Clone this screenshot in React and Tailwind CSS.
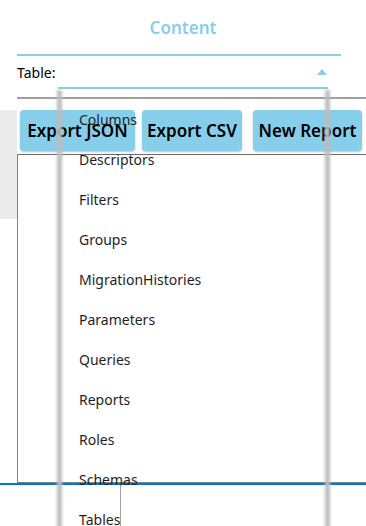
import React from 'react';

const items = [
  'Columns',
  'Descriptors',
  'Filters',
  'Groups',
  'MigrationHistories',
  'Parameters',
  'Queries',
  'Reports',
  'Roles',
  'Schemas',
  'Tables',
];

const font = { fontFamily: '"Segoe UI", "Noto Sans", "Open Sans", sans-serif' };

const App = () => {
  return (
    <div className="relative w-[366px] h-[526px] overflow-hidden bg-white" style={font}>
      {/* Header */}
      <div className="pt-[15px] text-center text-[17px] font-semibold leading-[26px] text-[#87ceeb]">Content</div>
      <div className="mx-[17px] mt-[13px] h-[2px] w-[324px] bg-[#87ceeb]" />

      {/* Table selector */}
      <div className="flex items-center h-[33px] pl-[17px]">
        <span className="w-[41px] text-[14px] text-black">Table:</span>
        <div className="relative w-[270px] h-[33px] border-b-2 border-[#87ceeb]">
          <svg className="absolute right-[1px] top-[13px]" width="10" height="6" viewBox="0 0 10 6">
            <polygon points="0,6 5,0 10,6" fill="#87ceeb" />
          </svg>
        </div>
      </div>
      <div className="ml-[17px] mt-[8px] h-[2px] bg-[#a0a0a0]" />

      {/* Toolbar + list */}
      <div className="relative flex mt-[11px]">
        <div className="w-[17px] h-[109px] bg-[#ebebeb]" />
        <div className="flex-1">
          <div className="flex gap-[7px] pl-[3px]">
            <button className="w-[115px] h-[41px] rounded-[4px] bg-[#87ceeb] shadow-[0_1px_2px_rgba(0,0,0,0.25)] text-[17px] font-semibold text-black">Export JSON</button>
            <button className="w-[100px] h-[41px] rounded-[4px] bg-[#87ceeb] shadow-[0_1px_2px_rgba(0,0,0,0.25)] text-[17px] font-semibold text-black">Export CSV</button>
            <button className="w-[109px] h-[41px] ml-[4px] rounded-[4px] bg-[#87ceeb] shadow-[0_1px_2px_rgba(0,0,0,0.25)] text-[17px] font-semibold text-black">New Report</button>
          </div>
          <div className="mt-[3px] h-[329px] border border-r-0 border-[#828282] border-t-[#6b6b6b]" />
        </div>
      </div>
      <div className="h-[2px] bg-[#0078d7]" />
      <div className="ml-[120px] w-px h-[60px] bg-[#a0a0a0]" />

      {/* Dropdown popup */}
      <div className="absolute left-[58px] top-[90px] w-[270px] h-[460px] z-10">
        <div className="absolute left-[-1px] top-0 bottom-0 w-[5px] bg-[#bdbdbd] blur-[1.5px]" />
        <div className="absolute right-[-2px] top-0 bottom-0 w-[5px] bg-[#bdbdbd] blur-[1.5px]" />
        <ul className="pt-[20px] pl-[21px]">
          {items.map((it) => (
            <li key={it} className="h-[40px] text-[14px] leading-[20px] text-[#1e1e1e]">
              {it}
            </li>
          ))}
        </ul>
      </div>
    </div>
  );
};

export default App;
